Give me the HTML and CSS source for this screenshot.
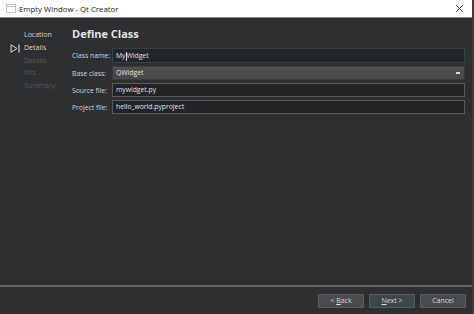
FILE: index.html
```html
<!DOCTYPE html>
<html lang="en">
<head>
    <meta charset="UTF-8">
    <meta name="viewport" content="width=device-width, initial-scale=1.0">
    <title>Empty Window - Qt Creator</title>
    <link rel="stylesheet" href="styles.css">
</head>
<body>
    <div class="window">
        <div class="titlebar">
            <svg class="app-icon" width="10" height="9" viewBox="0 0 10 9">
                <rect x="0.5" y="0.5" width="9" height="8" fill="none" stroke="#c4c4c4"/>
                <line x1="0.5" y1="2.5" x2="9.5" y2="2.5" stroke="#c4c4c4"/>
            </svg>
            <span class="title">Empty Window - Qt Creator</span>
            <svg class="close" width="9" height="9" viewBox="0 0 9 9">
                <path d="M1 1 L8 8 M8 1 L1 8" stroke="#444" stroke-width="1"/>
            </svg>
        </div>

        <div class="main">
            <ul class="steps">
                <li>Location</li>
                <li class="current">
                    <svg class="marker" width="11" height="9" viewBox="0 0 11 9">
                        <path d="M1 0.8 L7 4.5 L1 8.2 Z" fill="none" stroke="#d8d8d8" stroke-width="1"/>
                        <line x1="9" y1="0.5" x2="9" y2="8.5" stroke="#d8d8d8" stroke-width="1.2"/>
                    </svg>
                    Details
                </li>
                <li class="sub">Details</li>
                <li class="sub">Kits</li>
                <li class="sub">Summary</li>
            </ul>

            <div class="page">
                <h2>Define Class</h2>
                <div class="form">
                    <label>Class name:</label>
                    <div class="field focused">My<span class="caret"></span>Widget</div>
                    <label>Base class:</label>
                    <div class="field combo">QWidget<span class="arrow"></span></div>
                    <label>Source file:</label>
                    <div class="field">mywidget.py</div>
                    <label>Project file:</label>
                    <div class="field">hello_world.pyproject</div>
                </div>
            </div>
        </div>

        <div class="footer">
            <button class="btn">&lt; <u>B</u>ack</button>
            <button class="btn default"><u>N</u>ext &gt;</button>
            <button class="btn">Cancel</button>
        </div>
    </div>
</body>
</html>
```

FILE: styles.css
```css
* {
    box-sizing: border-box;
}

html, body {
    margin: 0;
    padding: 0;
    width: 474px;
    height: 314px;
    overflow: hidden;
}

body {
    font-family: "Open Sans", "Noto Sans", sans-serif;
    background-color: #2e2f31;
    color: #dcdcdc;
}

.window {
    display: flex;
    flex-direction: column;
    height: 314px;
    border-right: 2px solid #3a3b3d;
}

.titlebar {
    height: 18px;
    background-color: #ffffff;
    border-bottom: 1px solid #8a8a8a;
    display: flex;
    align-items: center;
    padding: 0 8px 0 6px;
    color: #1a1a1a;
    font-size: 7.8px;
}

.app-icon {
    margin-right: 3px;
}

.title {
    flex: 1;
}

.close {
    margin-top: -1px;
}

.main {
    flex: 1;
    display: flex;
}

.steps {
    list-style: none;
    margin: 0;
    padding: 11px 0 0 24px;
    width: 72px;
    font-size: 7px;
}

.steps li {
    height: 12.8px;
    line-height: 12.8px;
    position: relative;
    color: #d6d6d6;
}

.steps li.sub {
    color: #56575a;
}

.steps .marker {
    position: absolute;
    left: -14px;
    top: 2px;
}

.page {
    flex: 1;
    padding: 7px 7px 0 0;
}

h2 {
    margin: 0 0 6px 0;
    font-size: 11px;
    font-weight: 700;
    color: #e4e4e4;
    line-height: 17px;
}

.form {
    display: grid;
    grid-template-columns: 40px 1fr;
    row-gap: 3px;
    align-items: center;
    font-size: 6.8px;
}

.form label {
    color: #d4d4d4;
    white-space: nowrap;
}

.field {
    height: 14px;
    line-height: 12px;
    padding: 0 3px;
    background-color: #222325;
    border: 1px solid #58595b;
    color: #e0e0e0;
    position: relative;
}

.field.focused {
    height: 15px;
    line-height: 13px;
    background-color: #232627;
    border-color: #2f4347;
}

.caret {
    display: inline-block;
    width: 1px;
    height: 9px;
    background-color: #d0d0d0;
    vertical-align: middle;
}

.field.combo {
    background: linear-gradient(#4f5052, #47484a);
    border-color: #3a3b3d;
}

.arrow {
    position: absolute;
    right: 4px;
    top: 5px;
    width: 4px;
    height: 2px;
    background-color: #d8d8d8;
}

.footer {
    height: 29px;
    border-top: 2px solid #606163;
    display: flex;
    justify-content: flex-end;
    align-items: center;
    gap: 5px;
    padding: 0 6px 0 0;
}

.btn {
    width: 46px;
    height: 14px;
    padding: 0;
    font-family: "Open Sans", "Noto Sans", sans-serif;
    font-size: 7px;
    color: #d8d8d8;
    background-color: #4a4b4d;
    border: 1px solid #5a5b5d;
    border-radius: 1px;
}

.btn.default {
    background-color: #3f4648;
    border-color: #4f6063;
}
```
